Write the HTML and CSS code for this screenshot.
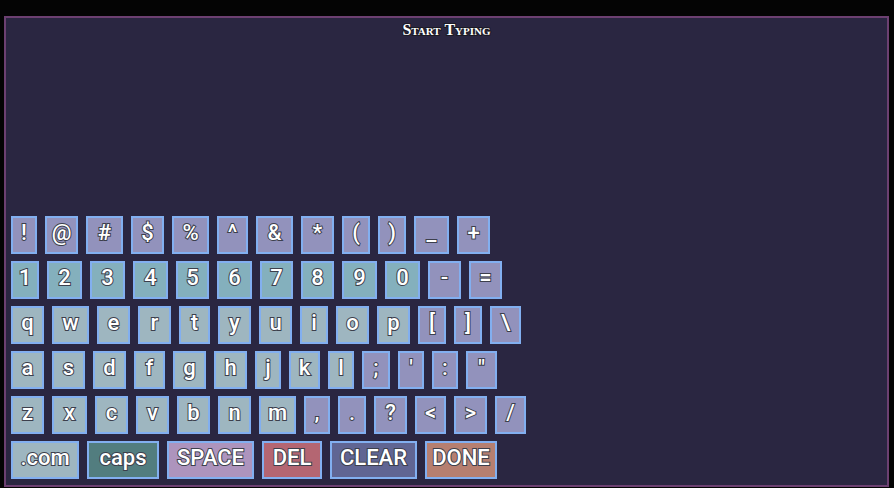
FILE: index.html
```html
<!DOCTYPE html>
<html lang="en">
<head>
    <meta charset="UTF-8">
    <meta name="viewport" content="width=device-width, initial-scale=1.0">
    <title>Start Typing</title>
    <link rel="stylesheet" href="styles.css">
</head>
<body>
    <main class="panel">
        <h1 class="title">Start Typing</h1>
        <div class="output" aria-live="polite"></div>

        <div class="keyboard">
            <div class="row">
                <button class="key symbol w26">!</button>
                <button class="key symbol w33">@</button>
                <button class="key symbol w37">#</button>
                <button class="key symbol w33">$</button>
                <button class="key symbol w37">%</button>
                <button class="key symbol w31">^</button>
                <button class="key symbol w37">&amp;</button>
                <button class="key symbol w33">*</button>
                <button class="key symbol w28">(</button>
                <button class="key symbol w28">)</button>
                <button class="key symbol w35">_</button>
                <button class="key symbol w33">+</button>
            </div>
            <div class="row">
                <button class="key number w28">1</button>
                <button class="key number w35">2</button>
                <button class="key number w35">3</button>
                <button class="key number w35">4</button>
                <button class="key number w33">5</button>
                <button class="key number w35">6</button>
                <button class="key number w33">7</button>
                <button class="key number w33">8</button>
                <button class="key number w35">9</button>
                <button class="key number w35">0</button>
                <button class="key symbol w33">-</button>
                <button class="key symbol w33">=</button>
            </div>
            <div class="row">
                <button class="key letter w33">q</button>
                <button class="key letter w37">w</button>
                <button class="key letter w33">e</button>
                <button class="key letter w33">r</button>
                <button class="key letter w31">t</button>
                <button class="key letter w33">y</button>
                <button class="key letter w33">u</button>
                <button class="key letter w28">i</button>
                <button class="key letter w33">o</button>
                <button class="key letter w33">p</button>
                <button class="key symbol w28">[</button>
                <button class="key symbol w28">]</button>
                <button class="key symbol w31">\</button>
            </div>
            <div class="row">
                <button class="key letter w33">a</button>
                <button class="key letter w33">s</button>
                <button class="key letter w33">d</button>
                <button class="key letter w31">f</button>
                <button class="key letter w33">g</button>
                <button class="key letter w33">h</button>
                <button class="key letter w26">j</button>
                <button class="key letter w31">k</button>
                <button class="key letter w26">l</button>
                <button class="key symbol w28">;</button>
                <button class="key symbol w26">'</button>
                <button class="key symbol w26">:</button>
                <button class="key symbol w31">"</button>
            </div>
            <div class="row">
                <button class="key letter w33">z</button>
                <button class="key letter w35">x</button>
                <button class="key letter w33">c</button>
                <button class="key letter w33">v</button>
                <button class="key letter w33">b</button>
                <button class="key letter w33">n</button>
                <button class="key letter w37">m</button>
                <button class="key symbol w26">,</button>
                <button class="key symbol w28">.</button>
                <button class="key symbol w33">?</button>
                <button class="key symbol w31">&lt;</button>
                <button class="key symbol w33">&gt;</button>
                <button class="key symbol w31">/</button>
            </div>
            <div class="row">
                <button class="key letter w68">.com</button>
                <button class="key caps w72">caps</button>
                <button class="key space w87">SPACE</button>
                <button class="key del w60">DEL</button>
                <button class="key clear w87">CLEAR</button>
                <button class="key done w72">DONE</button>
            </div>
        </div>
    </main>
</body>
</html>
```

FILE: styles.css
```css
* {
    box-sizing: border-box;
}

body {
    margin: 0;
    padding: 16px 5px 1px 4px;
    min-height: 100vh;
    display: flex;
    flex-direction: column;
    background-color: #040404;
    color: #fff;
}

.panel {
    flex: 1;
    display: flex;
    flex-direction: column;
    padding: 2px 5px 6px;
    background-color: #2a2641;
    border: 2px solid #6c4071;
}

.title {
    margin: 0;
    font-family: "Liberation Serif", serif;
    font-size: 16px;
    line-height: 20px;
    font-weight: bold;
    font-variant: small-caps;
    text-align: center;
    -webkit-text-stroke: 2px #1c1a24;
    paint-order: stroke fill;
}

.output {
    flex: 1;
}

.keyboard {
    display: flex;
    flex-direction: column;
    gap: 7px;
}

.row {
    display: flex;
    gap: 8px;
}

.key {
    height: 38px;
    padding: 0 0 4px;
    border: 2px solid #82aff0;
    font-family: Roboto, sans-serif;
    font-size: 22px;
    line-height: 28px;
    font-weight: 500;
    text-align: center;
    color: #fff;
    -webkit-text-stroke: 2px #3c3f4c;
    paint-order: stroke fill;
    cursor: pointer;
}

.key:hover {
    border-color: #fff;
}

/* key widths */
.w26 { width: 26px; }
.w28 { width: 28px; }
.w31 { width: 31px; }
.w33 { width: 33px; }
.w35 { width: 35px; }
.w37 { width: 37px; }
.w60 { width: 60px; }
.w68 { width: 68px; }
.w72 { width: 72px; }
.w87 { width: 87px; }

/* key colours */
.symbol { background-color: #9292bc; }
.number { background-color: #84b0bd; }
.letter { background-color: #9eb6c0; }
.caps { background-color: #527d7f; }
.space { background-color: #ad94bd; }
.del { background-color: #b46672; }
.clear { background-color: #606593; }
.done { background-color: #b67f70; }
```
